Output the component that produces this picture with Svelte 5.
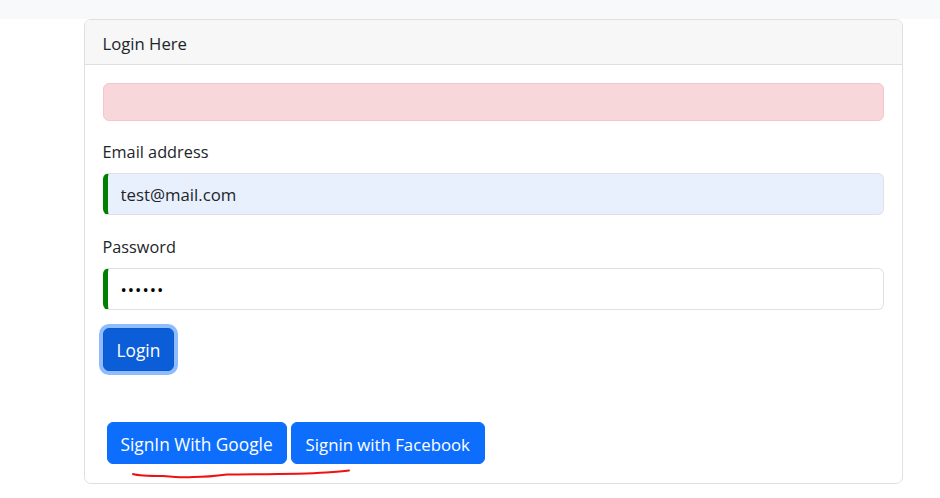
<script>
    const socialLogins = ['SignIn With Google', 'Signin with Facebook'];
</script>

<div class="topbar"></div>

<div class="card">
    <div class="card-header">Login Here</div>
    <div class="card-body">
        <div class="alert"></div>

        <label class="form-label" for="email">Email address</label>
        <input id="email" class="form-control filled" type="email" value="test@mail.com" />

        <label class="form-label second" for="password">Password</label>
        <input id="password" class="form-control secret" type="password" value="secret" />

        <button class="btn focused">Login</button>

        <div class="social">
            {#each socialLogins as label}
                <button class="btn">{label}</button>
            {/each}
        </div>
    </div>

    <!-- pen mark drawn over the screenshot -->
    <svg class="scribble" width="230" height="14" viewBox="0 0 230 14">
        <path
            d="M2 6 C8 8 20 8 32 8 C42 9 52 10 62 9 C75 9 85 8 96 6.500 C125 6 165 6.500 195 4.500 C205 4 212 3.500 218 2.500"
            fill="none"
            stroke="#f01010"
            stroke-width="2"
            stroke-linecap="round"
        />
    </svg>
</div>

<style>
    :global(body) {
        background: #fff;
        font-family: 'Open Sans', 'Noto Sans', sans-serif;
        color: #212529;
    }

    .topbar {
        height: 19px;
        background: #f8f9fa;
    }

    .card {
        position: relative;
        box-sizing: border-box;
        width: 819.500px;
        height: 465px;
        margin-left: 83.500px;
        border: 1.5px solid #e0e0e0;
        border-radius: 7px;
    }

    .card-header {
        box-sizing: border-box;
        height: 45px;
        padding: 0 18px;
        line-height: 47px;
        font-size: 16.700px;
        background: #f7f7f7;
        border-bottom: 1.5px solid #dfdfdf;
        border-radius: 6px 6px 0 0;
    }

    .card-body {
        padding: 18px;
    }

    .alert {
        box-sizing: border-box;
        height: 37.500px;
        margin-bottom: 20.500px;
        background: #f8d7da;
        border: 1px solid #f5c6cb;
        border-radius: 6px;
    }

    .form-label {
        display: block;
        height: 21px;
        line-height: 22px;
        font-size: 16.300px;
    }

    .form-label.second {
        margin-top: 21px;
    }

    .form-control {
        display: block;
        box-sizing: border-box;
        width: 100%;
        height: 42px;
        margin-top: 11px;
        padding: 1px 13px 0;
        font-family: inherit;
        font-size: 16.800px;
        color: #212529;
        background: #fff;
        border: 1px solid #dee2e6;
        border-left: 5px solid green;
        border-radius: 6px;
        outline: none;
    }

    .form-control.filled {
        background: #e8f0fe;
    }

    .form-control.secret {
        color: #000;
        letter-spacing: 1px;
    }

    .btn {
        box-sizing: border-box;
        height: 43px;
        padding: 1px 13px 0;
        font-family: inherit;
        font-size: 17.300px;
        color: #fff;
        background: #0d6efd;
        border: 1px solid #0d6efd;
        border-radius: 6px;
    }

    .btn.focused {
        display: block;
        margin-top: 18px;
        background: #0b5ed7;
        border-color: #0a58ca;
        box-shadow: 0 0 0 4px #8fbcfe;
    }

    .social {
        display: flex;
        gap: 4px;
        margin-top: 51px;
        margin-left: 4px;
    }

    .social .btn {
        height: 42px;
        padding-top: 2px;
    }

    .social .btn:last-child {
        padding-left: 14px;
        padding-right: 14px;
        font-size: 16.800px;
    }

    .scribble {
        position: absolute;
        left: 46.500px;
        top: 448px;
    }
</style>
